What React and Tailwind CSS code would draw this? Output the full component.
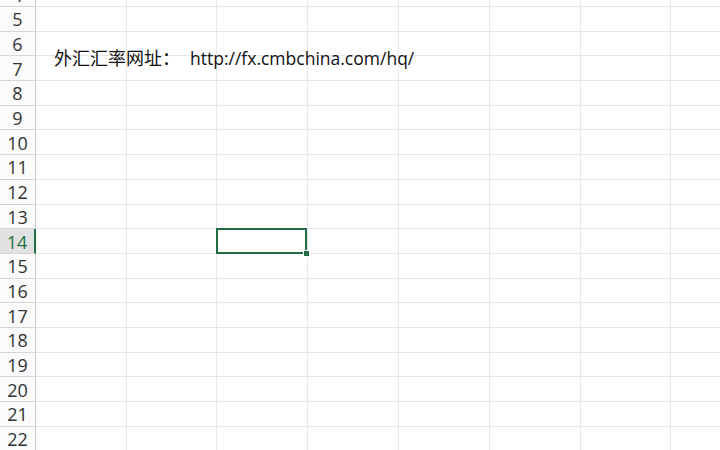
import React from "react";

const rows = [4,5,6,7,8,9,10,11,12,13,14,15,16,17,18,19,20,21,22,23];
const colW = ["w-[91px]","w-[90px]","w-[91px]","w-[91px]","w-[91px]","w-[91px]","w-[90px]","w-[60px]"];

export default function App() {
  return (
    <div className="relative w-[720px] h-[450px] overflow-hidden bg-white" style={{fontFamily: '"Open Sans","Noto Sans CJK SC",sans-serif'}}>
      <div className="flex flex-col -mt-[17.7px]">
        {rows.map((r) => {
          const sel = r === 14;
          return (
            <div key={r} className="flex h-[24.7px] shrink-0">
              <div className={`w-[36px] shrink-0 flex items-center justify-center pt-[2px] text-[18px] border-b border-[#d6d6d6] ${sel ? "bg-[#e1e1e1] text-[#217346] border-r-2 border-r-[#217346]" : "bg-[#fbfbfb] text-[#333] border-r border-r-[#c8c8c8]"}`}>
                {r}
              </div>
              {colW.map((w, i) => (
                <div key={i} className={`${w} shrink-0 border-b border-r border-[#e8e8e8] relative`}>
                  {sel && i === 2 && (
                    <div className="absolute z-10 -left-[1px] -top-[1px] right-0 -bottom-[1px] border-2 border-[#1f6e43]">
                      <div className="absolute -right-[5px] -bottom-[5px] w-[7px] h-[7px] bg-[#1f6e43] border border-white" />
                    </div>
                  )}
                </div>
              ))}
            </div>
          );
        })}
      </div>
      <div className="absolute left-[54px] top-[46px] flex items-baseline text-[18px] leading-[24px] text-[#111] whitespace-nowrap">
        <span>外汇汇率网址：</span>
        <span className="ml-[10px] text-[17.5px]">http://fx.cmbchina.com/hq/</span>
      </div>
    </div>
  );
}
